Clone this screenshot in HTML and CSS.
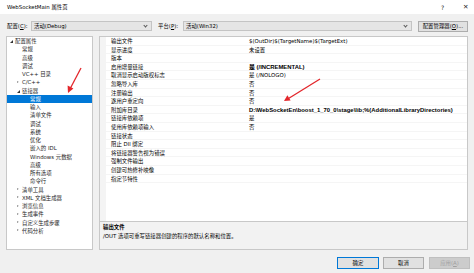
FILE: index.html
```html
<!DOCTYPE html>
<html>
<head>
<meta charset="utf-8">
<link rel="stylesheet" href="styles.css">
</head>
<body>
<div class="titlebar">
  <span class="title">WebSocketMain 属性页</span>
  <span class="tb-help">?</span>
  <span class="tb-close">✕</span>
</div>

<div class="main">
  <div class="cfg-row">
    <label class="lbl-cfg">配置(<u>C</u>):</label>
    <div class="combo cfg">活动(Debug)<i class="chev"></i></div>
    <label class="lbl-plat">平台(<u>P</u>):</label>
    <div class="combo plat">活动(Win32)<i class="chev"></i></div>
    <button class="btn mgr">配置管理器(<u>O</u>)...</button>
  </div>

  <div class="panes">
    <div class="tree">
      <div class="node l0"><i class="tw open"></i>配置属性</div>
      <div class="node l1"><i class="tw"></i>常规</div>
      <div class="node l1"><i class="tw"></i>高级</div>
      <div class="node l1"><i class="tw"></i>调试</div>
      <div class="node l1"><i class="tw"></i>VC++ 目录</div>
      <div class="node l1"><i class="tw shut"></i>C/C++</div>
      <div class="node l1"><i class="tw open"></i>链接器</div>
      <div class="node l2 sel"><i class="tw"></i>常规</div>
      <div class="node l2"><i class="tw"></i>输入</div>
      <div class="node l2"><i class="tw"></i>清单文件</div>
      <div class="node l2"><i class="tw"></i>调试</div>
      <div class="node l2"><i class="tw"></i>系统</div>
      <div class="node l2"><i class="tw"></i>优化</div>
      <div class="node l2"><i class="tw"></i>嵌入的 IDL</div>
      <div class="node l2"><i class="tw"></i>Windows 元数据</div>
      <div class="node l2"><i class="tw"></i>高级</div>
      <div class="node l2"><i class="tw"></i>所有选项</div>
      <div class="node l2"><i class="tw"></i>命令行</div>
      <div class="node l1"><i class="tw shut"></i>清单工具</div>
      <div class="node l1"><i class="tw shut"></i>XML 文档生成器</div>
      <div class="node l1"><i class="tw shut"></i>浏览信息</div>
      <div class="node l1"><i class="tw shut"></i>生成事件</div>
      <div class="node l1"><i class="tw shut"></i>自定义生成步骤</div>
      <div class="node l1"><i class="tw shut"></i>代码分析</div>
    </div>

    <div class="props">
      <div class="grid">
        <div class="row"><span class="name">输出文件</span><span class="val">$(OutDir)$(TargetName)$(TargetExt)</span></div>
        <div class="row"><span class="name">显示进度</span><span class="val">未设置</span></div>
        <div class="row"><span class="name">版本</span><span class="val"></span></div>
        <div class="row"><span class="name">启用增量链接</span><span class="val b">是 (/INCREMENTAL)</span></div>
        <div class="row"><span class="name">取消显示启动版权标志</span><span class="val">是 (/NOLOGO)</span></div>
        <div class="row"><span class="name">忽略导入库</span><span class="val">否</span></div>
        <div class="row"><span class="name">注册输出</span><span class="val">否</span></div>
        <div class="row"><span class="name">逐用户重定向</span><span class="val">否</span></div>
        <div class="row"><span class="name">附加库目录</span><span class="val b">D:\WebSocketEn\boost_1_70_0\stage\lib;%(AdditionalLibraryDirectories)</span></div>
        <div class="row"><span class="name">链接库依赖项</span><span class="val">是</span></div>
        <div class="row"><span class="name">使用库依赖项输入</span><span class="val">否</span></div>
        <div class="row"><span class="name">链接状态</span><span class="val"></span></div>
        <div class="row"><span class="name">阻止 Dll 绑定</span><span class="val"></span></div>
        <div class="row"><span class="name">将链接器警告视为错误</span><span class="val"></span></div>
        <div class="row"><span class="name">强制文件输出</span><span class="val"></span></div>
        <div class="row"><span class="name">创建可热修补映像</span><span class="val"></span></div>
        <div class="row"><span class="name">指定节特性</span><span class="val"></span></div>
      </div>
      <div class="desc">
        <div class="desc-title">输出文件</div>
        <div>/OUT 选项可重写链接器创建的程序的默认名称和位置。</div>
      </div>
    </div>
  </div>
</div>

<div class="foot">
  <button class="btn ok">确定</button>
  <button class="btn">取消</button>
  <button class="btn off">应用(<u>A</u>)</button>
</div>

<!-- red annotation arrows drawn over the dialog -->
<svg class="marks" width="474" height="273" viewBox="0 0 474 273">
  <line x1="81" y1="68" x2="70.5" y2="88" stroke="#e3262b" stroke-width="1.3"/>
  <polygon points="68,93 67.6,85.6 73.4,88.6" fill="#e3262b"/>
  <line x1="320" y1="79" x2="288.5" y2="98.5" stroke="#e3262b" stroke-width="1.3"/>
  <polygon points="284,101 287.4,95.2 290.6,100.4" fill="#e3262b"/>
</svg>
</body>
</html>
```

FILE: styles.css
```css
* {box-sizing: border-box;}

body {
  margin: 0;
  width: 474px;
  height: 273px;
  overflow: hidden;
  position: relative;
  background: #f0f0f0;
  color: #000;
  font-family: "DejaVu Sans", "Noto Sans CJK SC", sans-serif;
  font-size: 5.4px;
}
u {text-decoration: underline;}

.titlebar {
  height: 14px;
  background: #fff;
  display: flex;
  align-items: center;
  padding-left: 7px;
}
.title {flex: 1;}
.tb-help {width: 22px; font-size: 6px; color: #222;}
.tb-close {width: 11px; font-size: 6.5px; color: #222;}

.main {padding: 7px 6px 0;}

.cfg-row {
  display: flex;
  align-items: center;
  height: 10px;
}
.cfg-row label {padding-left: 1px;}
.lbl-cfg {width: 25px;}
.lbl-plat {width: 26px; margin-left: 5px;}

.combo {
  height: 10px;
  display: flex;
  align-items: center;
  padding-left: 2px;
  background: #e5e5e5;
  border: 1px solid #c4c4c4;
}
.combo.cfg {width: 121px;}
.combo.plat {width: 229px;}
.chev {
  margin-left: auto;
  margin-right: 4px;
  width: 3px;
  height: 3px;
  border-right: 0.8px solid #555;
  border-bottom: 0.8px solid #555;
  transform: translateY(-1px) rotate(45deg);
}

.btn {
  height: 12px;
  padding: 0;
  font: inherit;
  color: #000;
  background: #e1e1e1;
  border: 1px solid #adadad;
}
.btn.mgr {width: 50px; height: 11px; margin-left: 6px;}

.panes {
  display: flex;
  gap: 6px;
  margin-top: 5px;
  height: 214px;
}

.tree {
  width: 87px;
  background: #fff;
  border: 1px solid #c8c8c8;
  color: #1e1e1e;
}
.node {
  height: 8.26px;
  line-height: 8.26px;
  white-space: nowrap;
  display: flex;
  align-items: center;
}
.node.l0 {padding-left: 2px;}
.node.l1 {padding-left: 9px;}
.node.l2 {padding-left: 17px;}
.node.sel {background: #0078d7; color: #fff;}
.tw {width: 6px; height: 8px; position: relative; flex: none;}
.tw.open::before {
  content: "";
  position: absolute;
  left: 1px;
  top: 3px;
  border-left: 3px solid transparent;
  border-bottom: 3px solid #333;
}
.tw.shut::before {
  content: "";
  position: absolute;
  left: 1px;
  top: 2.5px;
  width: 0;
  height: 0;
  border-top: 1.6px solid transparent;
  border-bottom: 1.6px solid transparent;
  border-left: 2.6px solid #8a8a8a;
}
.tw.shut::after {
  content: "";
  position: absolute;
  left: 1.6px;
  top: 3.4px;
  border-top: 0.8px solid transparent;
  border-bottom: 0.8px solid transparent;
  border-left: 1.3px solid #fff;
}

.props {
  flex: 1;
  display: flex;
  flex-direction: column;
  border: 1px solid #c8c8c8;
  background: #fff;
}
.grid {
  flex: 1;
  background: linear-gradient(to right, #f4f4f4 6px, #fff 6px);
}
.row {
  display: grid;
  grid-template-columns: 143px 1fr;
  margin-left: 6px;
  height: 8.6px;
  line-height: 8.1px;
  border-bottom: 0.5px solid #f5f5f5;
  white-space: nowrap;
}
.name {padding-left: 5px;}
.val {padding-left: 0;}
.val.b {font-weight: bold; font-family: "Liberation Sans", "Noto Sans CJK SC", sans-serif; font-size: 5.9px;}

.desc {
  height: 28px;
  border-top: 1px solid #c8c8c8;
  background: #f2f2f2;
  padding: 1px 3px 0;
  line-height: 9px;
}
.desc-title {font-weight: bold;}

.foot {
  display: flex;
  justify-content: flex-end;
  gap: 4px;
  padding: 7px 4px 0 0;
}
.foot .btn {width: 41px;}
.foot .btn.ok {width: 42px; border-color: #0078d7;}
.foot .btn.off {margin-left: 1px; color: #a0a0a0; background: #cccccc; border-color: #bfbfbf;}

.marks {
  position: absolute;
  left: 0;
  top: 0;
  pointer-events: none;
}
```
